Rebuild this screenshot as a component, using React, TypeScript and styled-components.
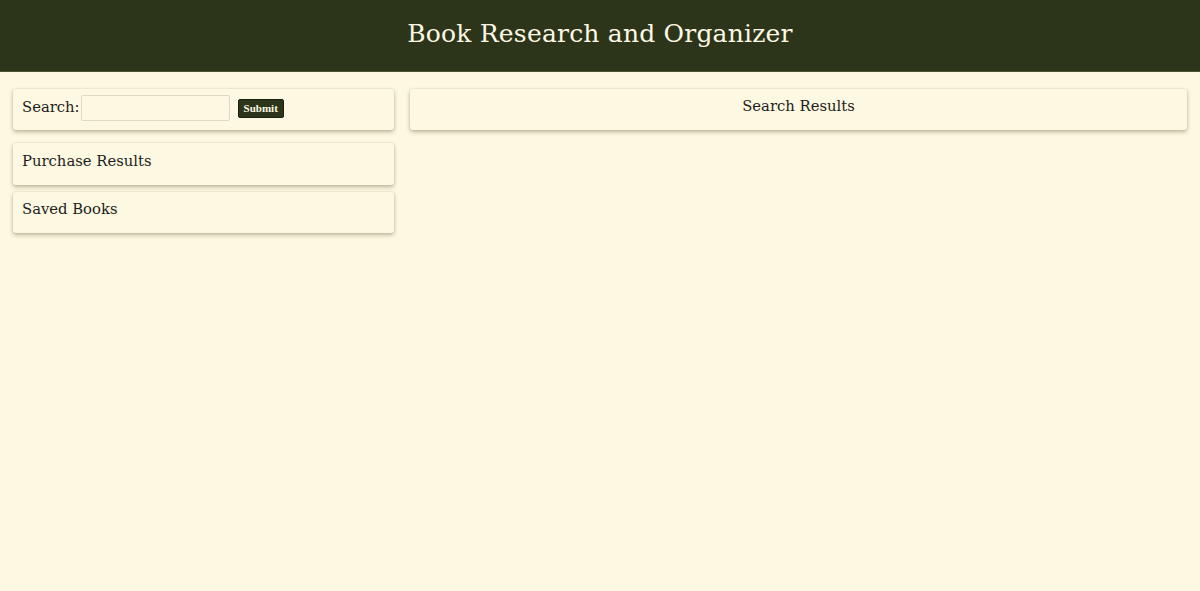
import React from "react";
import styled, { createGlobalStyle } from "styled-components";

const Global = createGlobalStyle`
  html, body { margin: 0; padding: 0; background: #fdf8e1; }
  body { font-family: "DejaVu Serif", "Liberation Serif", serif; color: #1d1d1d; }
  #root { min-height: 591px; }
`;

const Header = styled.header`
  height: 72px;
  background: #2c3519;
  display: flex;
  align-items: center;
  justify-content: center;
  border-bottom: 1px solid #4a5230;
  box-sizing: border-box;
  padding-bottom: 4px;
`;

const Title = styled.h1`
  margin: 0;
  font-weight: 400;
  font-size: 25px;
  color: #fdf8e6;
  letter-spacing: 0.2px;
`;

const Main = styled.main`
  display: grid;
  grid-template-columns: 381px 1fr;
  column-gap: 16px;
  padding: 17px 13px 0 13px;
  align-items: start;
`;

const Column = styled.div`
  display: flex;
  flex-direction: column;
`;

const Card = styled.section<{ $mt?: number; $h: number }>`
  background: #fdf8e1;
  border-radius: 3px;
  box-shadow: 0 2px 4px rgba(70, 60, 30, 0.35), 0 0 2px rgba(70, 60, 30, 0.12);
  height: ${(p) => p.$h}px;
  margin-top: ${(p) => p.$mt ?? 0}px;
  box-sizing: border-box;
  padding: 0 9px;
  display: flex;
  align-items: flex-start;
`;

const CardTitle = styled.h2<{ $pt?: number; $center?: boolean }>`
  margin: 0;
  width: 100%;
  text-align: ${(p) => (p.$center ? "center" : "left")};
  padding-top: ${(p) => p.$pt ?? 0}px;
  font-weight: 400;
  font-size: 14.8px;
  color: #1d1d1d;
`;

const SearchRow = styled.form`
  display: flex;
  align-items: center;
  height: 100%;
  box-sizing: border-box;
  padding-bottom: 4px;
`;

const Label = styled.label`
  font-size: 14.8px;
  margin-right: 1px;
  padding-bottom: 2px;
`;

const Input = styled.input`
  width: 149px;
  height: 26px;
  box-sizing: border-box;
  background: #fdf8e1;
  border: 1px solid #ded9c3;
  border-radius: 2px;
  margin-right: 8px;
  padding: 0 4px;
`;

const Button = styled.button`
  background: #2c3519;
  color: #fdf8e6;
  border: 1px solid #1b2110;
  border-radius: 2px;
  font-family: "Liberation Serif", serif;
  font-weight: 700;
  font-size: 11px;
  height: 19px;
  padding: 0 5px;
  margin-top: 1px;
`;

export default function App() {
  return (
    <>
      <Global />
      <Header>
        <Title>Book Research and Organizer</Title>
      </Header>
      <Main>
        <Column>
          <Card $h={41}>
            <SearchRow onSubmit={(e) => e.preventDefault()}>
              <Label htmlFor="q">Search:</Label>
              <Input id="q" type="text" />
              <Button type="submit">Submit</Button>
            </SearchRow>
          </Card>
          <Card $h={42} $mt={13}>
            <CardTitle $pt={9}>Purchase Results</CardTitle>
          </Card>
          <Card $h={41} $mt={7}>
            <CardTitle $pt={8}>Saved Books</CardTitle>
          </Card>
        </Column>
        <Column>
          <Card $h={41}>
            <CardTitle $pt={8} $center>
              Search Results
            </CardTitle>
          </Card>
        </Column>
      </Main>
    </>
  );
}
